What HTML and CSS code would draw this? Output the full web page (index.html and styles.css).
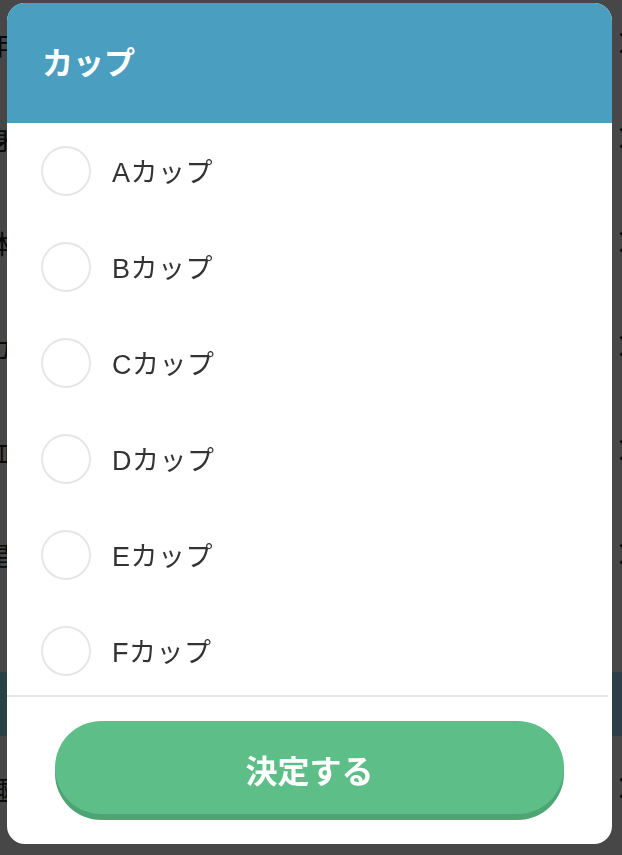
FILE: index.html
```html
<!DOCTYPE html>
<html lang="ja">
<head>
<meta charset="utf-8">
<title>カップ</title>
<link rel="stylesheet" href="styles.css">
</head>
<body>
<div class="page">
  <div class="row first"><span class="row-label">年齢</span><span class="chev"></span></div>
  <div class="row"><span class="row-label">身長</span><span class="chev"></span></div>
  <div class="row"><span class="row-label">体型</span><span class="chev"></span></div>
  <div class="row"><span class="row-label">カップ</span><span class="chev"></span></div>
  <div class="row"><span class="row-label">血液型</span><span class="chev"></span></div>
  <div class="row"><span class="row-label">星座</span><span class="chev"></span></div>
  <div class="row short"></div>
  <div class="band"></div>
  <div class="row"><span class="row-label">趣味</span><span class="chev"></span></div>
</div>

<div class="overlay"></div>

<div class="modal">
  <div class="modal-header">カップ</div>
  <div class="modal-list">
    <label class="option"><span class="radio"></span><span class="option-label">Aカップ</span></label>
    <label class="option"><span class="radio"></span><span class="option-label">Bカップ</span></label>
    <label class="option"><span class="radio"></span><span class="option-label">Cカップ</span></label>
    <label class="option"><span class="radio"></span><span class="option-label">Dカップ</span></label>
    <label class="option"><span class="radio"></span><span class="option-label">Eカップ</span></label>
    <label class="option"><span class="radio"></span><span class="option-label">Fカップ</span></label>
  </div>
  <div class="modal-footer">
    <button class="submit" type="button">決定する</button>
  </div>
</div>
</body>
</html>
```
FILE: styles.css
```css
html, body {
  margin: 0;
  padding: 0;
  height: 100%;
  overflow: hidden;
}

body {
  font-family: "Liberation Sans", "Noto Sans CJK JP", sans-serif;
  background: #ffffff;
  color: #333333;
}

/* background page */
.page {
  display: flex;
  flex-direction: column;
}

.row {
  height: 104px;
  display: flex;
  align-items: center;
  justify-content: space-between;
  padding: 0 2px 0 0;
  font-size: 26px;
  color: #222;
}

.row.first {
  height: 86px;
}

.row.short {
  height: 66px;
}

.row-label {
  margin-left: -14px;
}

.chev {
  width: 12px;
  height: 12px;
  border-top: 2px solid #111;
  border-right: 2px solid #111;
  transform: rotate(45deg);
  margin-right: -8px;
}

.band {
  height: 64px;
  background: #9ae1fe;
}

.overlay {
  position: fixed;
  inset: 0;
  background: rgba(0, 0, 0, 0.72);
}

/* modal */
.modal {
  position: fixed;
  left: 7px;
  top: 3px;
  width: 605px;
  height: 841px;
  background: #ffffff;
  border-radius: 18px;
  overflow: hidden;
  display: flex;
  flex-direction: column;
  font-family: "Liberation Sans", "Noto Sans CJK JP", sans-serif;
}

.modal-header {
  height: 120px;
  flex: none;
  background: #4a9fc0;
  color: #ffffff;
  font-family: "Noto Sans CJK JP", sans-serif;
  font-weight: 700;
  font-size: 31px;
  display: flex;
  align-items: center;
  padding-left: 35px;
  padding-bottom: 6px;
  box-sizing: border-box;
}

.modal-list {
  height: 572px;
  flex: none;
  overflow: hidden;
  display: flex;
  flex-direction: column;
}

.option {
  height: 96px;
  flex: none;
  display: flex;
  align-items: center;
  padding-left: 34px;
  gap: 21px;
}

.radio {
  width: 50px;
  height: 50px;
  box-sizing: border-box;
  border: 2px solid #e6e6e6;
  border-radius: 50%;
  flex: none;
}

.option-label {
  font-size: 27px;
  color: #333333;
  letter-spacing: 0.5px;
  padding-bottom: 2px;
}

.modal-footer {
  flex: 1;
  border-top: 2px solid #e5e5e5;
  margin-right: 4px;
  display: flex;
  align-items: flex-start;
  justify-content: center;
  padding-top: 24px;
  padding-left: 4px;
}

.submit {
  width: 509px;
  height: 93px;
  border: none;
  border-radius: 47px;
  background: #5dbe87;
  box-shadow: 0 6px 0 #4ea573;
  color: #ffffff;
  font-family: "Noto Sans CJK JP", sans-serif;
  font-weight: 700;
  font-size: 32px;
  padding: 0;
  padding-top: 2px;
  cursor: pointer;
}
```
